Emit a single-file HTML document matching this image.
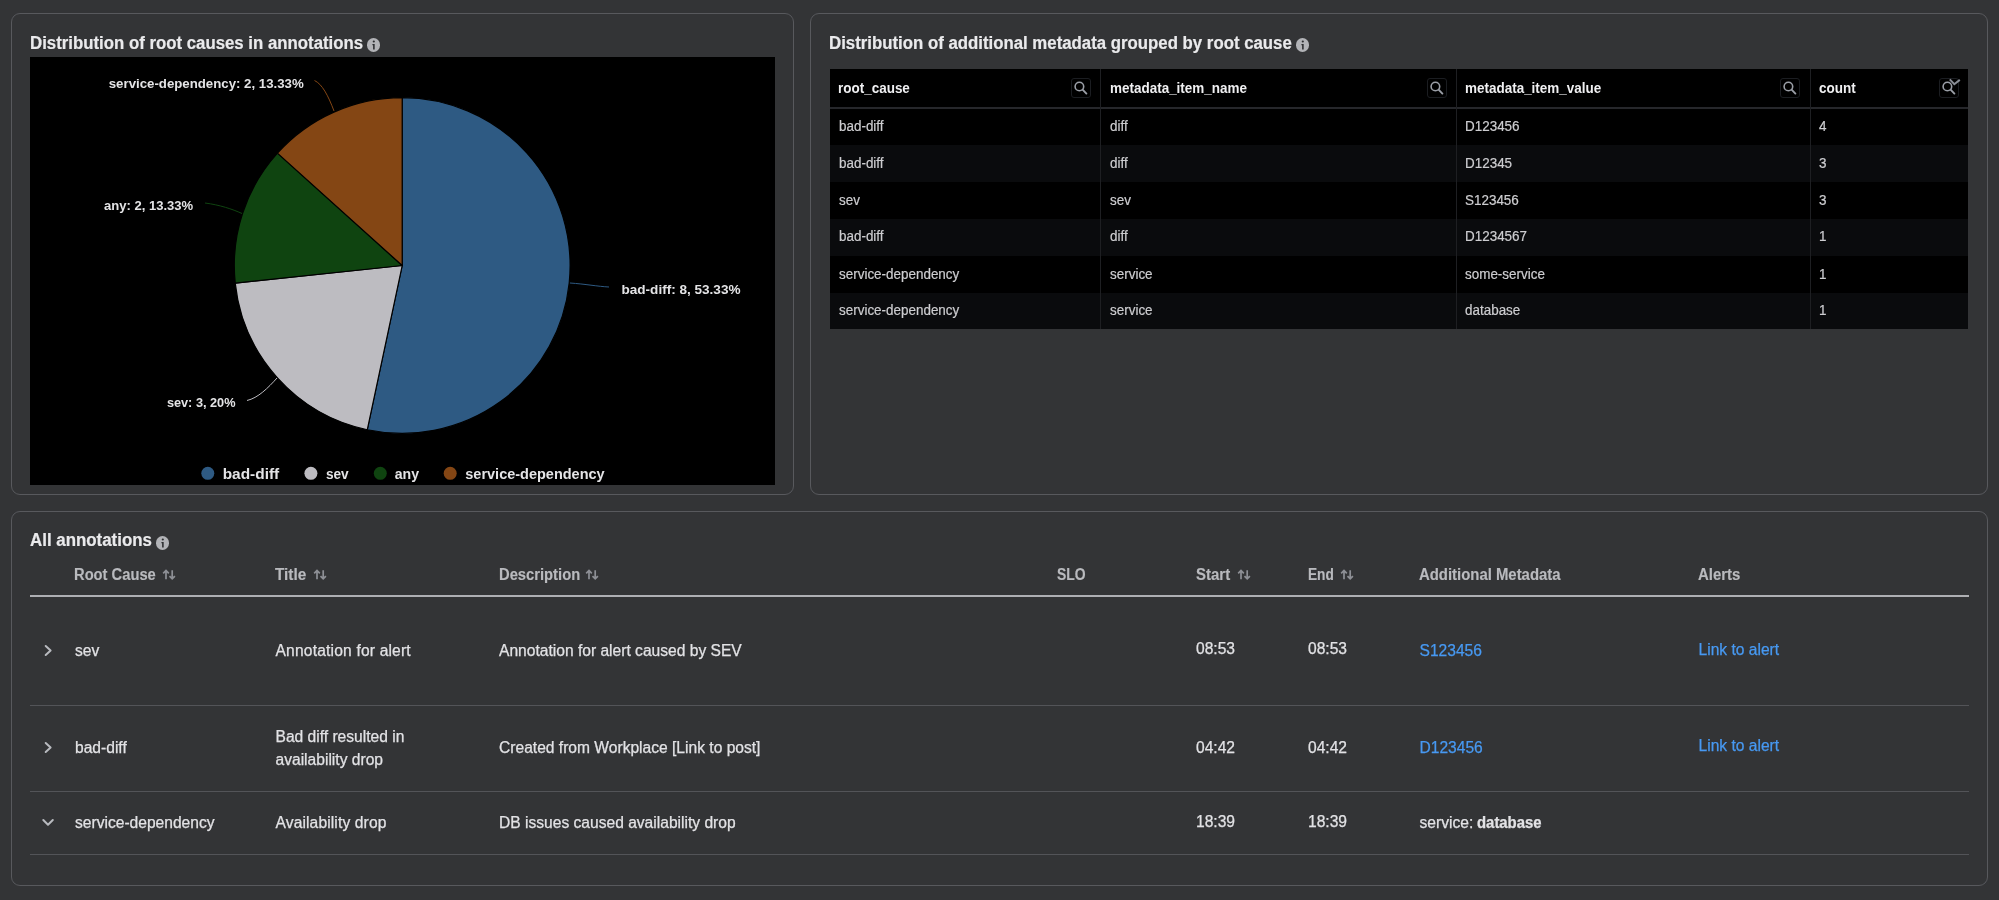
<!DOCTYPE html>
<html><head><meta charset="utf-8">
<style>
*{box-sizing:border-box;margin:0;padding:0}
html,body{width:1999px;height:900px;overflow:hidden;background:#333436;font-family:"Liberation Sans",sans-serif;color:#e3e3e5}
.abs{position:absolute;white-space:nowrap}
.panel{position:absolute;border:1px solid #58595d;border-radius:9px;background:#333436}
.ttl{position:absolute;font-size:18px;font-weight:700;color:#eaeaec;-webkit-text-stroke:0.2px currentColor;line-height:20px;white-space:nowrap;transform:scaleX(0.933);transform-origin:0 0}
.info{display:inline-block;position:absolute;width:13.6px;height:13.6px;border-radius:50%;background:#b2b3b7}
.info svg{position:absolute;left:0;top:0}
.tbl{position:absolute;left:830px;top:69px;width:1138px;height:260.3px;background:#000}
.hrow{position:absolute;left:0;top:0;width:1138px;height:39.5px;border-bottom:2px solid #26272b}
.row{position:absolute;left:0;width:1138px;height:37px}
.vline{position:absolute;top:0;width:1px;height:260px;background:#1e1f22}
.th{position:absolute;font-size:14px;font-weight:700;color:#f0f0f2;top:10.75px;margin-left:-0.6px;line-height:16px;transform:scaleX(0.962);transform-origin:0 0;white-space:nowrap}
.td{position:absolute;font-size:14px;color:#cdcdd0;-webkit-text-stroke:0.2px currentColor;line-height:16px;white-space:nowrap;transform:scaleX(0.96);transform-origin:0 0;margin-left:-0.6px}
.sb{position:absolute;top:9px;width:20px;height:20px;border:1px solid #1b1d21;border-radius:3px}
.bh{position:absolute;top:565.5px;font-size:16px;font-weight:700;color:#b9babe;-webkit-text-stroke:0.15px currentColor;line-height:18px;white-space:nowrap;transform-origin:0 0}
.sort{position:absolute;top:569px}
.bt{position:absolute;font-size:15.6px;color:#e2e2e5;-webkit-text-stroke:0.25px currentColor;line-height:22.5px;white-space:nowrap}
.lnk{color:#4799f2}
.hl{position:absolute;left:30px;width:1939px;height:2px;background:#535458}
</style></head>
<body><div id="root" style="position:absolute;left:0;top:0;width:1999px;height:900px;will-change:transform">
<!-- panels -->
<div class="panel" style="left:11px;top:13px;width:783px;height:482px"></div>
<div class="panel" style="left:810px;top:13px;width:1178px;height:482px"></div>
<div class="panel" style="left:11px;top:511px;width:1977px;height:375px"></div>

<!-- titles -->
<div class="ttl" style="left:30px;top:32.8px">Distribution of root causes in annotations</div>
<div class="info" style="left:366.7px;top:38.2px"><svg width="13.6" height="13.6" viewBox="0 0 14 14"><circle cx="7" cy="3.6" r="1.1" fill="#2b2c2f"/><path d="M5.6 6.2 H7.9 V11.8 H6.3 V7.4 H5.6 Z" fill="#2b2c2f"/></svg></div>

<div class="ttl" style="left:829.3px;top:32.8px">Distribution of additional metadata grouped by root cause</div>
<div class="info" style="left:1295.7px;top:38.4px"><svg width="13.6" height="13.6" viewBox="0 0 14 14"><circle cx="7" cy="3.6" r="1.1" fill="#2b2c2f"/><path d="M5.6 6.2 H7.9 V11.8 H6.3 V7.4 H5.6 Z" fill="#2b2c2f"/></svg></div>

<div class="ttl" style="left:30px;top:530.4px;transform:scaleX(0.938)">All annotations</div>
<div class="info" style="left:155.6px;top:536.2px"><svg width="13.6" height="13.6" viewBox="0 0 14 14"><circle cx="7" cy="3.6" r="1.1" fill="#2b2c2f"/><path d="M5.6 6.2 H7.9 V11.8 H6.3 V7.4 H5.6 Z" fill="#2b2c2f"/></svg></div>

<!-- chart -->
<div class="abs" style="left:30px;top:57px;width:745px;height:428px;background:#000"></div>
<svg class="abs" style="left:0;top:0" width="1999" height="900" viewBox="0 0 1999 900">
<g stroke="#000" stroke-width="1.2" stroke-linejoin="round">
<path d="M402.2 265.5 L402.20 97.60 A167.9 167.9 0 1 1 367.29 429.73 Z" fill="#2e5a83"/>
<path d="M402.2 265.5 L367.29 429.73 A167.9 167.9 0 0 1 235.22 283.05 Z" fill="#bdbcc1"/>
<path d="M402.2 265.5 L235.22 283.05 A167.9 167.9 0 0 1 277.43 153.15 Z" fill="#0f4410"/>
<path d="M402.2 265.5 L277.43 153.15 A167.9 167.9 0 0 1 402.20 97.60 Z" fill="#844614"/>
</g>
<g fill="none" stroke-width="1">
<path d="M314.5 80.5 C322 84 328 95 334 111" stroke="#844614"/>
<path d="M205 203 C220 205 232 209 242 213.5" stroke="#0f4410"/>
<path d="M247 400.5 C258 398 268 388 277 378" stroke="#bdbcc1"/>
<path d="M570 283 C585 284 598 286.5 609 287" stroke="#2e5a83"/>
</g>
<g font-family="Liberation Sans" font-weight="700" font-size="13.2" fill="#e4e4e6" stroke="#000" stroke-width="0" >
<text x="108.75" y="88.1" textLength="195" lengthAdjust="spacingAndGlyphs">service-dependency: 2, 13.33%</text>
<text x="104" y="210" textLength="89.2" lengthAdjust="spacingAndGlyphs">any: 2, 13.33%</text>
<text x="166.9" y="406.8" textLength="68.6" lengthAdjust="spacingAndGlyphs">sev: 3, 20%</text>
<text x="621.5" y="293.5" textLength="119" lengthAdjust="spacingAndGlyphs">bad-diff: 8, 53.33%</text>
</g>
<g>
<circle cx="207.8" cy="473.3" r="6.5" fill="#2e5a83"/>
<circle cx="310.9" cy="473.3" r="6.5" fill="#bdbcc1"/>
<circle cx="380.3" cy="473.3" r="6.5" fill="#0f4410"/>
<circle cx="450.2" cy="473.3" r="6.5" fill="#844614"/>
</g>
<g font-family="Liberation Sans" font-weight="700" font-size="14" fill="#e4e4e6">
<text x="222.7" y="478.7" textLength="56.5" lengthAdjust="spacingAndGlyphs">bad-diff</text>
<text x="325.9" y="478.7" textLength="22.8" lengthAdjust="spacingAndGlyphs">sev</text>
<text x="394.7" y="478.7" textLength="24.3" lengthAdjust="spacingAndGlyphs">any</text>
<text x="465.3" y="478.7" textLength="139.3" lengthAdjust="spacingAndGlyphs">service-dependency</text>
</g>
</svg>

<!-- metadata table -->
<div class="tbl">
  <div class="row" style="top:39.5px;height:36.8px;background:#000"></div>
  <div class="row" style="top:76.3px;height:36.8px;background:#0a0b0d"></div>
  <div class="row" style="top:113.1px;height:36.8px;background:#000"></div>
  <div class="row" style="top:149.9px;height:36.8px;background:#0a0b0d"></div>
  <div class="row" style="top:186.7px;height:36.8px;background:#000"></div>
  <div class="row" style="top:223.5px;height:36.8px;background:#0a0b0d"></div>
  <div class="hrow"></div>
  <div class="vline" style="left:270px"></div>
  <div class="vline" style="left:626px"></div>
  <div class="vline" style="left:980px"></div>
  <div class="th" style="left:8.6px">root_cause</div>
  <div class="th" style="left:280.5px">metadata_item_name</div>
  <div class="th" style="left:635.5px">metadata_item_value</div>
  <div class="th" style="left:989.5px">count</div>
  <div class="td" style="left:9.3px;top:48.55px">bad-diff</div>
  <div class="td" style="left:280.5px;top:48.55px">diff</div>
  <div class="td" style="left:636px;top:48.55px">D123456</div>
  <div class="td" style="left:989.6px;top:48.55px">4</div>
  <div class="td" style="left:9.3px;top:86.05px">bad-diff</div>
  <div class="td" style="left:280.5px;top:86.05px">diff</div>
  <div class="td" style="left:636px;top:86.05px">D12345</div>
  <div class="td" style="left:989.6px;top:86.05px">3</div>
  <div class="td" style="left:9.3px;top:122.65px">sev</div>
  <div class="td" style="left:280.5px;top:122.65px">sev</div>
  <div class="td" style="left:636px;top:122.65px">S123456</div>
  <div class="td" style="left:989.6px;top:122.65px">3</div>
  <div class="td" style="left:9.3px;top:159.35px">bad-diff</div>
  <div class="td" style="left:280.5px;top:159.35px">diff</div>
  <div class="td" style="left:636px;top:159.35px">D1234567</div>
  <div class="td" style="left:989.6px;top:159.35px">1</div>
  <div class="td" style="left:9.3px;top:196.75px">service-dependency</div>
  <div class="td" style="left:280.5px;top:196.75px">service</div>
  <div class="td" style="left:636px;top:196.75px">some-service</div>
  <div class="td" style="left:989.6px;top:196.75px">1</div>
  <div class="td" style="left:9.3px;top:233.45px">service-dependency</div>
  <div class="td" style="left:280.5px;top:233.45px">service</div>
  <div class="td" style="left:636px;top:233.45px">database</div>
  <div class="td" style="left:989.6px;top:233.45px">1</div>
  <div class="sb" style="left:241px"><svg style="position:absolute;left:-1px;top:-1px;overflow:visible" width="20" height="20"><circle cx="8.4" cy="8.5" r="4.3" fill="none" stroke="#9a9ea6" stroke-width="1.6"/><path d="M11.6 11.7 L15.4 15.6" stroke="#9a9ea6" stroke-width="1.9" stroke-linecap="round"/></svg></div>
  <div class="sb" style="left:596.5px"><svg style="position:absolute;left:-1px;top:-1px;overflow:visible" width="20" height="20"><circle cx="8.4" cy="8.5" r="4.3" fill="none" stroke="#9a9ea6" stroke-width="1.6"/><path d="M11.6 11.7 L15.4 15.6" stroke="#9a9ea6" stroke-width="1.9" stroke-linecap="round"/></svg></div>
  <div class="sb" style="left:950px"><svg style="position:absolute;left:-1px;top:-1px;overflow:visible" width="20" height="20"><circle cx="8.4" cy="8.5" r="4.3" fill="none" stroke="#9a9ea6" stroke-width="1.6"/><path d="M11.6 11.7 L15.4 15.6" stroke="#9a9ea6" stroke-width="1.9" stroke-linecap="round"/></svg></div>
  <div class="sb" style="left:1109px"><svg style="position:absolute;left:-1px;top:-1px;overflow:visible" width="20" height="20"><circle cx="8.4" cy="8.5" r="4.3" fill="none" stroke="#9a9ea6" stroke-width="1.6"/><path d="M11.6 11.7 L15.4 15.6" stroke="#9a9ea6" stroke-width="1.9" stroke-linecap="round"/><path d="M10.8 1.4 L15.3 6.2 L20.8 1.9" fill="none" stroke="#8a8e96" stroke-width="2"/></svg></div>
</div>
<div id="tcells"></div>

<!-- bottom table -->
<div class="bh" style="left:74.4px;transform:scaleX(0.92)">Root Cause</div>
<div class="bh" style="left:275.1px;transform:scaleX(0.96)">Title</div>
<div class="bh" style="left:498.5px;transform:scaleX(0.922)">Description</div>
<div class="bh" style="left:1056.8px;transform:scaleX(0.87)">SLO</div>
<div class="bh" style="left:1196.0px;transform:scaleX(0.936)">Start</div>
<div class="bh" style="left:1308.1px;transform:scaleX(0.855)">End</div>
<div class="bh" style="left:1419.0px;transform:scaleX(0.931)">Additional Metadata</div>
<div class="bh" style="left:1697.7px;transform:scaleX(0.933)">Alerts</div>
<svg class="abs" style="left:161.5px;top:569px" width="14" height="12"><g fill="none" stroke="#8e9096" stroke-width="1.7"><path d="M4 1.6 V10.2 M1.2 4.4 L4 1.4 L6.8 4.4 M10.2 1.3 V10 M7.5 7.2 L10.2 9.9 L12.9 7.2"/></g></svg>
<svg class="abs" style="left:312.9px;top:569px" width="14" height="12"><g fill="none" stroke="#8e9096" stroke-width="1.7"><path d="M4 1.6 V10.2 M1.2 4.4 L4 1.4 L6.8 4.4 M10.2 1.3 V10 M7.5 7.2 L10.2 9.9 L12.9 7.2"/></g></svg>
<svg class="abs" style="left:584.8px;top:569px" width="14" height="12"><g fill="none" stroke="#8e9096" stroke-width="1.7"><path d="M4 1.6 V10.2 M1.2 4.4 L4 1.4 L6.8 4.4 M10.2 1.3 V10 M7.5 7.2 L10.2 9.9 L12.9 7.2"/></g></svg>
<svg class="abs" style="left:1236.7px;top:569px" width="14" height="12"><g fill="none" stroke="#8e9096" stroke-width="1.7"><path d="M4 1.6 V10.2 M1.2 4.4 L4 1.4 L6.8 4.4 M10.2 1.3 V10 M7.5 7.2 L10.2 9.9 L12.9 7.2"/></g></svg>
<svg class="abs" style="left:1339.9px;top:569px" width="14" height="12"><g fill="none" stroke="#8e9096" stroke-width="1.7"><path d="M4 1.6 V10.2 M1.2 4.4 L4 1.4 L6.8 4.4 M10.2 1.3 V10 M7.5 7.2 L10.2 9.9 L12.9 7.2"/></g></svg>
<svg class="abs" style="left:0;top:0" width="80" height="900"><g fill="none" stroke="#b8babf" stroke-width="2" stroke-linecap="round" stroke-linejoin="round">
<path d="M45.7 646 L50.6 650.5 L45.7 655"/>
<path d="M45.7 743 L50.6 747.5 L45.7 752"/>
<path d="M43.3 820 L48 824.7 L52.8 820"/></g></svg>
<div class="hl" style="top:594.6px;height:2.6px;background:#aeafb3"></div>
<div class="hl" style="top:704.5px;height:1.5px"></div>
<div class="hl" style="top:790.5px;height:1.5px"></div>
<div class="hl" style="top:853.5px;height:1.5px"></div>

<div class="bt" style="left:75px;top:640.0px">sev</div>
<div class="bt" style="left:275.5px;top:640.0px;letter-spacing:0.18px">Annotation for alert</div>
<div class="bt" style="left:499px;top:640.0px">Annotation for alert caused by SEV</div>
<div class="bt" style="left:1196px;top:638.3px">08:53</div>
<div class="bt" style="left:1308px;top:638.3px">08:53</div>
<div class="bt lnk" style="left:1419.5px;top:640.1px">S123456</div>
<div class="bt lnk" style="left:1698.5px;top:639.1px">Link to alert</div>
<div class="bt" style="left:75px;top:737.3px">bad-diff</div>
<div class="bt" style="left:275.5px;top:726.0px">Bad diff resulted in<br>availability drop</div>
<div class="bt" style="left:499px;top:737.3px">Created from Workplace [Link to post]</div>
<div class="bt" style="left:1196px;top:737.2px">04:42</div>
<div class="bt" style="left:1308px;top:737.2px">04:42</div>
<div class="bt lnk" style="left:1419.5px;top:737.2px">D123456</div>
<div class="bt lnk" style="left:1698.5px;top:734.9px">Link to alert</div>
<div class="bt" style="left:75px;top:811.6px">service-dependency</div>
<div class="bt" style="left:275.5px;top:811.6px;letter-spacing:0.12px">Availability drop</div>
<div class="bt" style="left:499px;top:811.6px">DB issues caused availability drop</div>
<div class="bt" style="left:1196px;top:811.2px">18:39</div>
<div class="bt" style="left:1308px;top:811.2px">18:39</div>
<div class="bt" style="left:1419.5px;top:811.7px">service: <b style="display:inline-block;transform:scaleX(0.955);transform-origin:0 0;margin-left:-0.7px">database</b></div>
</div></body></html>
